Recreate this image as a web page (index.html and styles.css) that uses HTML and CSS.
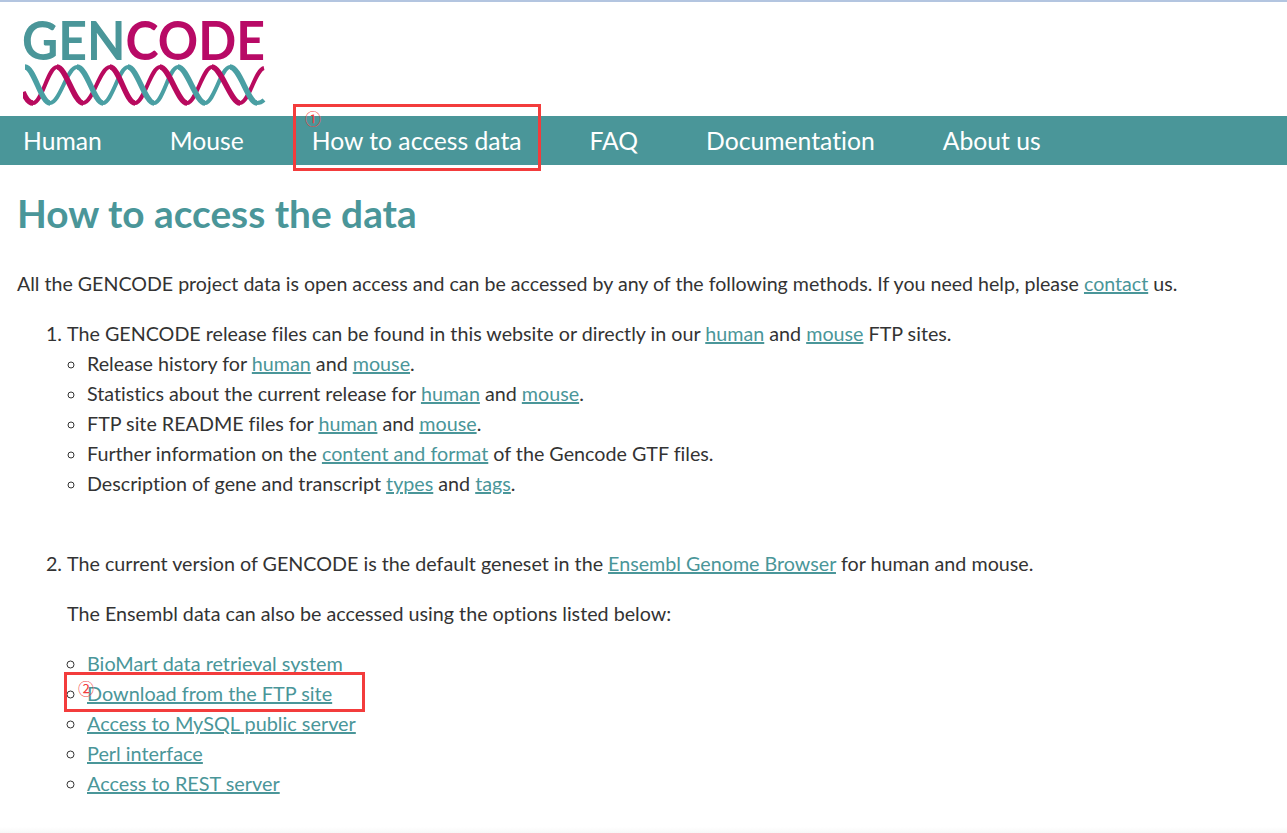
FILE: index.html
```html
<!DOCTYPE html>
<html lang="en">
<head>
    <meta charset="UTF-8">
    <title>GENCODE - How to access the data</title>
    <link rel="stylesheet" href="styles.css">
</head>
<body>
    <header class="logo-row">
        <svg class="logo" width="300" height="88" viewBox="0 0 300 88">
            <text class="logo-text" x="-1" y="39.5" textLength="243" lengthAdjust="spacingAndGlyphs"><tspan class="logo-gen">GEN</tspan><tspan class="logo-code">CODE</tspan></text>
            <!-- rising parts first, falling parts on top -->
            <path class="strand strand-rise strand-pink" d="M10 83 C19 83 25 47 34 47 M60 83 C70 83 77 47 87 47 M112 83 C121 83 128 47 137 47 M164 83 C173 83 180 47 189 47 M217 83 C226 83 232 50 241 48"/>
            <path class="strand strand-rise strand-teal" d="M27 83 C37 83 44 47 54 47 M80 83 C89 83 96 47 105 47 M131 83 C140 83 146 47 155 47 M182 83 C191 83 198 47 207 47 M234 83 C237 83 239 82 241 80"/>
            <path class="strand strand-fall strand-teal" d="M2 47 C11 47 18 83 27 83 M54 47 C64 47 71 83 80 83 M105 47 C114 47 122 83 131 83 M155 47 C164 47 173 83 182 83 M207 47 C217 47 225 83 234 83"/>
            <path class="strand strand-fall strand-pink" d="M0 72 C3 79 6 83 10 83 M34 47 C43 47 51 83 60 83 M87 47 C96 47 103 83 112 83 M137 47 C146 47 155 83 164 83 M189 47 C198 47 208 83 217 83"/>
        </svg>
    </header>

    <nav class="main-nav">
        <a href="#">Human</a>
        <a href="#">Mouse</a>
        <a href="#">How to access data</a>
        <a href="#">FAQ</a>
        <a href="#">Documentation</a>
        <a href="#">About us</a>
    </nav>

    <main class="content">
        <h1>How to access the data</h1>
        <p>All the GENCODE project data is open access and can be accessed by any of the following methods. If you need help, please <a href="#">contact</a> us.</p>

        <ol>
            <li class="step">
                The GENCODE release files can be found in this website or directly in our <a href="#">human</a> and <a href="#">mouse</a> FTP sites.
                <ul>
                    <li>Release history for <a href="#">human</a> and <a href="#">mouse</a>.</li>
                    <li>Statistics about the current release for <a href="#">human</a> and <a href="#">mouse</a>.</li>
                    <li>FTP site README files for <a href="#">human</a> and <a href="#">mouse</a>.</li>
                    <li>Further information on the <a href="#">content and format</a> of the Gencode GTF files.</li>
                    <li>Description of gene and transcript <a href="#">types</a> and <a href="#">tags</a>.</li>
                </ul>
            </li>
            <li>
                The current version of GENCODE is the default geneset in the <a href="#">Ensembl Genome Browser</a> for human and mouse.
                <p>The Ensembl data can also be accessed using the options listed below:</p>
                <ul class="link-list">
                    <li><a href="#">BioMart data retrieval system</a></li>
                    <li><a href="#">Download from the FTP site</a></li>
                    <li><a href="#">Access to MySQL public server</a></li>
                    <li><a href="#">Perl interface</a></li>
                    <li><a href="#">Access to REST server</a></li>
                </ul>
            </li>
        </ol>
    </main>

    <!-- annotations drawn over the screenshot -->
    <div class="mark mark-nav"><span class="mark-num">①</span></div>
    <div class="mark mark-ftp"><span class="mark-num">②</span></div>
    <div class="page-fade"></div>
</body>
</html>
```

FILE: styles.css
```css
html, body {
    height: 833px;
    overflow: hidden;
}
body {
    margin: 0;
    position: relative;
    font-family: Lato, sans-serif;
    font-size: 19.6px;
    line-height: 30px;
    font-variant-ligatures: none;
    color: #333;
    background-color: #fff;
    border-top: 2px solid #b3c5e0;
    box-sizing: border-box;
}
a {
    color: #4a9699;
    text-decoration-thickness: 2px;
}
.logo-row {
    height: 114px;
    padding-left: 23px;
    box-sizing: border-box;
}
.logo {
    display: block;
    padding-top: 18px;
}
.logo-text {
    font-family: Lato, sans-serif;
    font-size: 54px;
    font-weight: 700;
}
.logo-gen {
    fill: #4a9699;
}
.logo-code {
    fill: #b80a66;
}
.strand {
    fill: none;
}
.strand-rise {
    stroke-width: 4;
}
.strand-fall {
    stroke-width: 5.5;
}
.strand-teal {
    stroke: #4a9fa3;
}
.strand-pink {
    stroke: #b80a5e;
}
.main-nav {
    display: flex;
    gap: 68px;
    height: 49px;
    padding-left: 23px;
    background-color: #4a9699;
}
.main-nav a {
    color: #fff;
    text-decoration: none;
    font-size: 24.7px;
    line-height: 50px;
}
.content {
    padding: 0 17px;
}
h1 {
    margin: 23px 0 31px;
    font-size: 38.8px;
    line-height: 50px;
    font-weight: 700;
    color: #4a9699;
}
.content p {
    margin: 0 0 20px;
}
ol {
    margin: 0;
    padding-left: 50px;
    font-size: 19.72px;
}
ul {
    margin: 0;
    padding-left: 20px;
}
li ul {
    list-style-type: circle;
}
.link-list {
    margin-top: -1px;
    font-size: 19.85px;
}
.step {
    margin-bottom: 50px;
}
li p {
    margin: 20px 0 !important;
}
.mark {
    position: absolute;
    border: 3px solid #f33c3c;
    box-sizing: border-box;
}
.mark-nav {
    left: 293px;
    top: 102px;
    width: 248px;
    height: 67px;
}
.mark-ftp {
    left: 64px;
    top: 670px;
    width: 301px;
    height: 40px;
}
.mark-num {
    position: absolute;
    color: #f33c3c;
    font-family: "Noto Sans CJK SC", sans-serif;
    font-size: 16px;
    line-height: 16px;
}
.mark-nav .mark-num {
    left: 9px;
    top: 3px;
}
.mark-ftp .mark-num {
    left: 11px;
    top: 5px;
}
.page-fade {
    position: absolute;
    left: 0;
    right: 0;
    bottom: 0;
    height: 6px;
    background: linear-gradient(#fff, #f7f7f7);
}
```
